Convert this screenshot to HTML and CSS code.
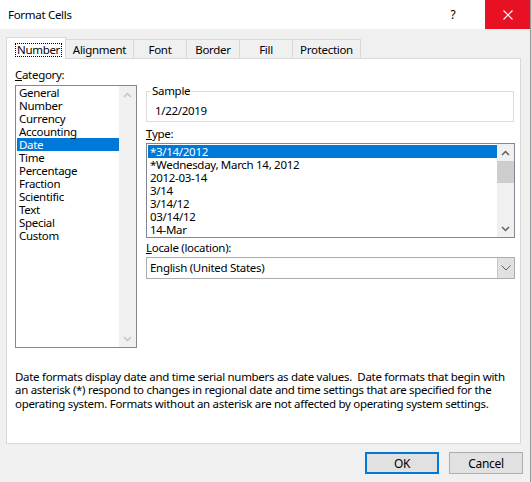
FILE: index.html
```html
<!DOCTYPE html>
<html lang="en">
<head>
<meta charset="utf-8">
<title>Format Cells</title>
<link rel="stylesheet" href="styles.css">
</head>
<body>
<div class="window">
  <div class="titlebar">
    <span class="title">Format Cells</span>
    <span class="help">?</span>
    <div class="close">
      <svg width="10" height="10" viewBox="0 0 10 10"><path d="M0.5 0.5L9.5 9.5M9.5 0.5L0.5 9.5" stroke="#fff" stroke-width="1.1" fill="none"/></svg>
    </div>
  </div>
  <div class="tabs">
    <div class="tab active w-number"><span class="focus">Number</span></div>
    <div class="tab w-alignment">Alignment</div>
    <div class="tab w-font">Font</div>
    <div class="tab w-border">Border</div>
    <div class="tab w-fill">Fill</div>
    <div class="tab w-protection">Protection</div>
  </div>
  <div class="panel">
    <div class="cols">
      <div class="left">
        <div class="label"><u>C</u>ategory:</div>
        <div class="listbox cat">
          <ul class="items">
            <li>General</li>
            <li>Number</li>
            <li>Currency</li>
            <li>Accounting</li>
            <li class="sel">Date</li>
            <li>Time</li>
            <li>Percentage</li>
            <li>Fraction</li>
            <li>Scientific</li>
            <li>Text</li>
            <li>Special</li>
            <li>Custom</li>
          </ul>
          <div class="vscroll disabled">
            <div class="sbtn"><svg width="9" height="6" viewBox="0 0 9 6"><path d="M1 5L4.5 1.5L8 5" stroke="#c4c4c4" stroke-width="1.5" fill="none"/></svg></div>
            <div class="track"></div>
            <div class="sbtn"><svg width="9" height="6" viewBox="0 0 9 6"><path d="M1 1L4.5 4.5L8 1" stroke="#c4c4c4" stroke-width="1.5" fill="none"/></svg></div>
          </div>
        </div>
      </div>
      <div class="right">
        <fieldset class="sample">
          <legend>Sample</legend>
          <div class="sample-val">1/22/2019</div>
        </fieldset>
        <div class="label type-label"><u>T</u>ype:</div>
        <div class="listbox type">
          <ul class="items">
            <li class="sel">*3/14/2012</li>
            <li>*Wednesday, March 14, 2012</li>
            <li>2012-03-14</li>
            <li>3/14</li>
            <li>3/14/12</li>
            <li>03/14/12</li>
            <li>14-Mar</li>
          </ul>
          <div class="vscroll">
            <div class="sbtn"><svg width="9" height="6" viewBox="0 0 9 6"><path d="M1 5L4.5 1.5L8 5" stroke="#606060" stroke-width="1.5" fill="none"/></svg></div>
            <div class="thumb"></div>
            <div class="track"></div>
            <div class="sbtn"><svg width="9" height="6" viewBox="0 0 9 6"><path d="M1 1L4.5 4.5L8 1" stroke="#606060" stroke-width="1.5" fill="none"/></svg></div>
          </div>
        </div>
        <div class="label locale-label"><u>L</u>ocale (location):</div>
        <div class="combo">
          <span class="combo-text">English (United States)</span>
          <span class="combo-btn"><svg width="10" height="6" viewBox="0 0 10 6"><path d="M0.5 0.5L5 5L9.5 0.5" stroke="#606060" stroke-width="1" fill="none"/></svg></span>
        </div>
      </div>
    </div>
    <p class="desc">Date formats display date and time serial numbers as date values.&nbsp; Date formats that begin with<br>an asterisk (*) respond to changes in regional date and time settings that are specified for the<br>operating system. Formats without an asterisk are not affected by operating system settings.</p>
  </div>
  <div class="buttons">
    <button class="btn default">OK</button>
    <button class="btn">Cancel</button>
  </div>
</div>
</body>
</html>
```
FILE: styles.css
```css
html {
  background: #d6d6d6;
}
body {
  margin: 0;
  font-family: "Noto Sans", "Open Sans", sans-serif;
  font-size: 11.5px;
  letter-spacing: -0.3px;
  color: #000;
}
.window {
  width: 530px;
  height: 482px;
  border-right: 1px solid #9a9a9a;
  background: #f0f0f0;
  display: flex;
  flex-direction: column;
}
.titlebar {
  flex: none;
  height: 29px;
  background: #fff;
  display: flex;
  align-items: center;
}
.title {
  flex: 1;
  padding-left: 8px;
}
.help {
  width: 30px;
  margin-right: 17px;
  text-align: center;
  font-size: 12px;
}
.close {
  width: 45px;
  height: 29px;
  background: #e81123;
  display: flex;
  align-items: center;
  justify-content: center;
}
.tabs {
  flex: none;
  height: 29px;
  display: flex;
  align-items: flex-end;
  padding-left: 6px;
}
.tab {
  box-sizing: border-box;
  height: 19px;
  margin-left: -1px;
  padding-top: 2px;
  border: 1px solid #d9d9d9;
  border-bottom: 0;
  background: #f0f0f0;
  text-align: center;
  line-height: 16px;
  white-space: nowrap;
}
.tab.active {
  height: 22px;
  margin-left: 0;
  margin-bottom: -1px;
  padding: 4px 0 0 8px;
  text-align: left;
  background: #fff;
  position: relative;
  z-index: 1;
}
.focus {
  display: inline-block;
  width: 47px;
  box-sizing: border-box;
  border: 1px dotted #000;
  text-align: center;
  line-height: 12px;
}
.w-number { width: 60px; }
.w-alignment { width: 69px; }
.w-font { width: 54px; }
.w-border { width: 54px; }
.w-fill { width: 54px; }
.w-protection { width: 69px; }

.panel {
  flex: none;
  box-sizing: border-box;
  height: 386px;
  margin: 0 9px 0 6px;
  padding-left: 8px;
  border: 1px solid #d9d9d9;
  background: #fff;
}
.cols {
  display: flex;
  gap: 9px;
}
.left {
  width: 122px;
  padding-top: 9px;
}
.right {
  width: 369px;
}
.label {
  height: 14px;
  line-height: 14px;
  white-space: nowrap;
}
.listbox {
  box-sizing: border-box;
  display: flex;
  border: 1px solid #828790;
  background: #fff;
}
.cat {
  height: 263px;
  margin-top: 3px;
}
.type {
  height: 95px;
  margin-top: 2px;
}
.items {
  flex: 1;
  margin: 0;
  padding: 0 0 0 1px;
  list-style: none;
}
.type .items {
  padding-top: 1px;
}
.items li {
  height: 13px;
  line-height: 13px;
  padding-left: 2px;
  white-space: nowrap;
}
.items li.sel {
  background: #0078d7;
  color: #fff;
}
.vscroll {
  width: 17px;
  flex: none;
  display: flex;
  flex-direction: column;
  background: #f0f0f0;
}
.sbtn {
  height: 17px;
  flex: none;
  display: flex;
  align-items: center;
  justify-content: center;
}
.thumb {
  height: 22px;
  flex: none;
  background: #cdcdcd;
}
.track {
  flex: 1;
}
.sample {
  margin: 25px 1px 0 0;
  padding: 6px 0 3px 8px;
  border: 1px solid #dcdcdc;
  min-width: 0;
}
.sample legend {
  padding: 0 1px;
  margin-left: -4px;
  line-height: 14px;
}
.sample-val {
  line-height: 14px;
}
.type-label {
  margin-top: 5px;
}
.locale-label {
  margin-top: 3px;
}
.combo {
  box-sizing: border-box;
  height: 22px;
  margin-top: 2px;
  display: flex;
  border: 1px solid #adadad;
  background: #fff;
}
.combo-text {
  flex: 1;
  padding-left: 3px;
  line-height: 20px;
}
.combo-btn {
  width: 16px;
  display: flex;
  align-items: center;
  justify-content: center;
  background: #e1e1e1;
  border-left: 1px solid #c8c8c8;
}
.desc {
  margin: 22px 0 0;
  line-height: 13.4px;
  white-space: nowrap;
}
.buttons {
  display: flex;
  justify-content: flex-end;
  gap: 10px;
  padding: 8px 7px 0 0;
}
.btn {
  box-sizing: border-box;
  width: 74px;
  height: 22px;
  padding: 0;
  border: 1px solid #adadad;
  background: #e1e1e1;
  font-family: inherit;
  font-size: 12px;
  letter-spacing: inherit;
  color: #000;
}
.btn.default {
  border: 2px solid #0078d7;
}
```
